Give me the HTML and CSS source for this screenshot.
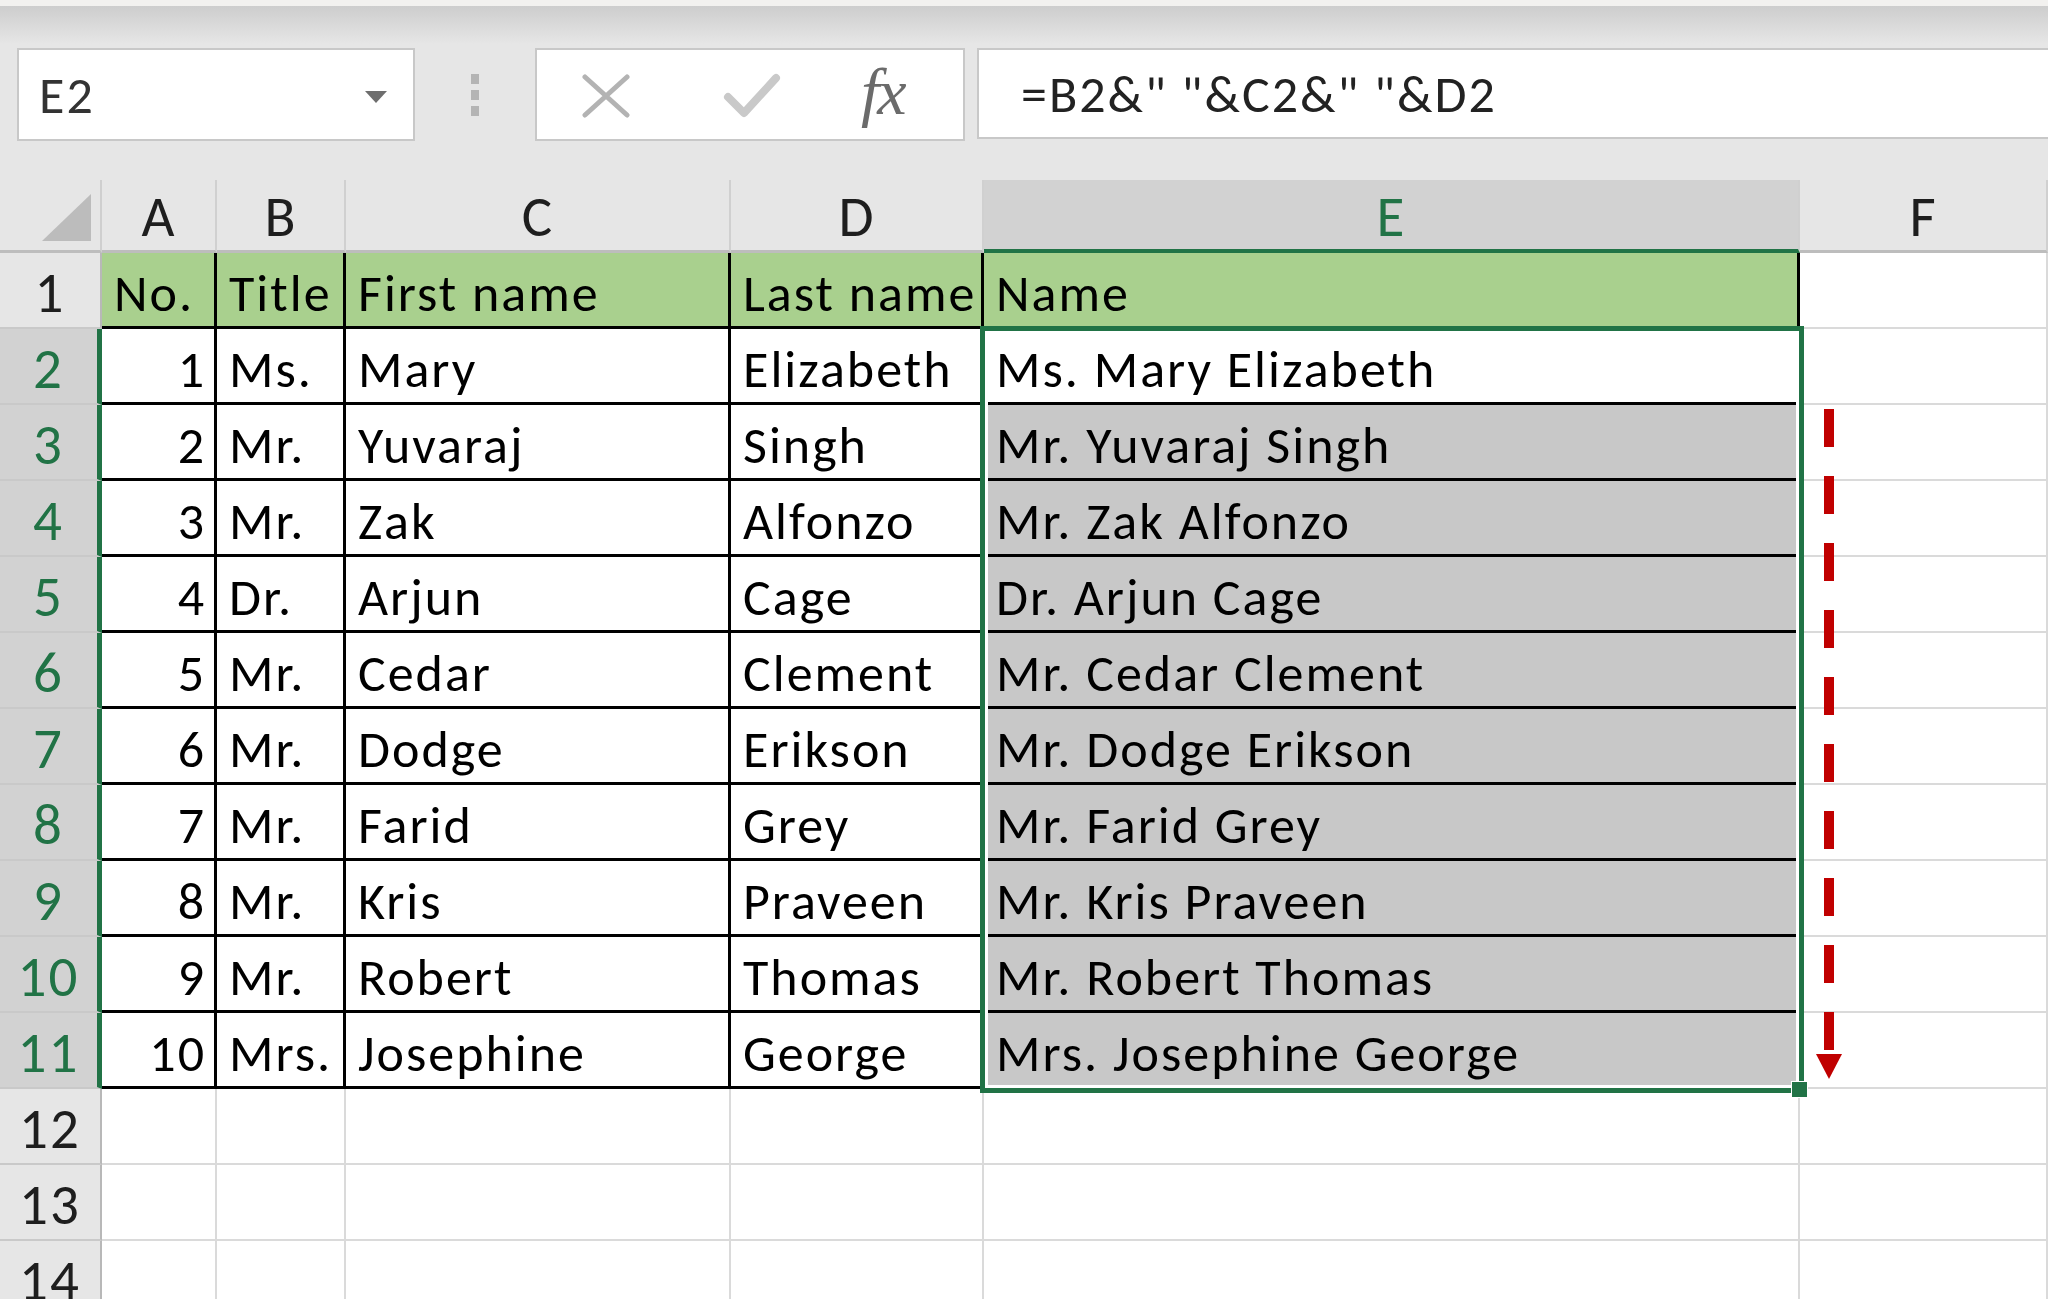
FILE: index.html
```html
<!DOCTYPE html>
<html>
<head>
<meta charset="utf-8">
<link rel="stylesheet" href="styles.css">
</head>
<body>
<div class="app">
  <div class="topband"></div>
  <div class="toolbar">
    <div class="namebox">
      <span class="nb-text">E2</span>
      <span class="nb-arrow"></span>
    </div>
    <div class="grip"><span></span><span></span><span></span></div>
    <div class="btnbox">
      <svg class="ic-x" width="50" height="44" viewBox="0 0 50 44"><path d="M4 3 L46 41 M46 3 L4 41" stroke="#b3b3b3" stroke-width="5" fill="none" stroke-linecap="round"/></svg>
      <svg class="ic-ok" width="58" height="46" viewBox="0 0 58 46"><path d="M5 24 L21 40 L53 5" stroke="#c9c9c9" stroke-width="8" fill="none" stroke-linecap="round" stroke-linejoin="round"/></svg>
      <span class="ic-fx">fx</span>
    </div>
    <div class="formula">=B2&amp;" "&amp;C2&amp;" "&amp;D2</div>
  </div>
  <div class="sheet">
    <div class="grid">
      <div class="corner"><span class="tri"></span></div>
      <div class="ch">A</div><div class="ch">B</div><div class="ch">C</div><div class="ch">D</div><div class="ch sel">E</div><div class="ch">F</div>

      <div class="rh">1</div>
      <div class="c d hd">No.</div><div class="c d hd">Title</div><div class="c d hd">First name</div><div class="c d hd">Last name</div><div class="c d hd">Name</div><div class="c"></div>

      <div class="rh sel">2</div>
      <div class="c d num">1</div><div class="c d">Ms.</div><div class="c d">Mary</div><div class="c d">Elizabeth</div><div class="c d">Ms. Mary Elizabeth</div><div class="c"></div>

      <div class="rh sel">3</div>
      <div class="c d num">2</div><div class="c d">Mr.</div><div class="c d">Yuvaraj</div><div class="c d">Singh</div><div class="c d gs">Mr. Yuvaraj Singh</div><div class="c"></div>

      <div class="rh sel">4</div>
      <div class="c d num">3</div><div class="c d">Mr.</div><div class="c d">Zak</div><div class="c d">Alfonzo</div><div class="c d gs">Mr. Zak Alfonzo</div><div class="c"></div>

      <div class="rh sel">5</div>
      <div class="c d num">4</div><div class="c d">Dr.</div><div class="c d">Arjun</div><div class="c d">Cage</div><div class="c d gs">Dr. Arjun Cage</div><div class="c"></div>

      <div class="rh sel">6</div>
      <div class="c d num">5</div><div class="c d">Mr.</div><div class="c d">Cedar</div><div class="c d">Clement</div><div class="c d gs">Mr. Cedar Clement</div><div class="c"></div>

      <div class="rh sel">7</div>
      <div class="c d num">6</div><div class="c d">Mr.</div><div class="c d">Dodge</div><div class="c d">Erikson</div><div class="c d gs">Mr. Dodge Erikson</div><div class="c"></div>

      <div class="rh sel">8</div>
      <div class="c d num">7</div><div class="c d">Mr.</div><div class="c d">Farid</div><div class="c d">Grey</div><div class="c d gs">Mr. Farid Grey</div><div class="c"></div>

      <div class="rh sel">9</div>
      <div class="c d num">8</div><div class="c d">Mr.</div><div class="c d">Kris</div><div class="c d">Praveen</div><div class="c d gs">Mr. Kris Praveen</div><div class="c"></div>

      <div class="rh sel">10</div>
      <div class="c d num">9</div><div class="c d">Mr.</div><div class="c d">Robert</div><div class="c d">Thomas</div><div class="c d gs">Mr. Robert Thomas</div><div class="c"></div>

      <div class="rh sel">11</div>
      <div class="c d num">10</div><div class="c d">Mrs.</div><div class="c d">Josephine</div><div class="c d">George</div><div class="c d gs">Mrs. Josephine George</div><div class="c"></div>

      <div class="rh">12</div>
      <div class="c"></div><div class="c"></div><div class="c"></div><div class="c"></div><div class="c"></div><div class="c"></div>

      <div class="rh">13</div>
      <div class="c"></div><div class="c"></div><div class="c"></div><div class="c"></div><div class="c"></div><div class="c"></div>

      <div class="rh">14</div>
      <div class="c"></div><div class="c"></div><div class="c"></div><div class="c"></div><div class="c"></div><div class="c"></div>
    </div>
    <div class="selection"></div>
    <div class="fillhandle"></div>
    <svg class="arrow" width="40" height="700" viewBox="0 0 40 700">
      <line x1="20" y1="0" x2="20" y2="642" stroke="#c00000" stroke-width="10" stroke-dasharray="38 29"/>
      <polygon points="7,645 33,645 20,670" fill="#c00000"/>
    </svg>
  </div>
</div>
</body>
</html>
```

FILE: styles.css
```css
html, body {
  margin: 0;
  padding: 0;
  width: 2048px;
  height: 1299px;
  overflow: hidden;
  background: #ffffff;
}

.app {
  font-family: "Carlito", "Calibri", "Lato", "Liberation Sans", sans-serif;
  font-weight: 500;
  color: #000;
}

.topband {
  height: 6px;
  background: #f2f1ef;
}

.toolbar {
  height: 174px;
  box-sizing: border-box;
  background: linear-gradient(#cdcdcd 0px, #e6e6e6 38px, #e6e6e6 100%);
  display: flex;
  align-items: flex-start;
  padding: 42px 0 0 17px;
}

.namebox {
  width: 398px;
  height: 93px;
  box-sizing: border-box;
  background: #fff;
  border: 2px solid #c8c8c8;
  display: flex;
  align-items: center;
  justify-content: space-between;
  padding: 0 26px 0 20px;
}

.nb-text {
  font-size: 52px;
  color: #333;
  line-height: 1;
  letter-spacing: 2px;
}

.nb-arrow {
  width: 0;
  height: 0;
  border-left: 11px solid transparent;
  border-right: 11px solid transparent;
  border-top: 12px solid #6e6e6e;
  margin-top: 4px;
}

.grip {
  width: 120px;
  height: 93px;
  display: flex;
  flex-direction: column;
  align-items: center;
  justify-content: center;
  gap: 6px;
}

.grip span {
  width: 8px;
  height: 10px;
  background: #b4b4b4;
}

.btnbox {
  width: 430px;
  height: 93px;
  box-sizing: border-box;
  background: #fff;
  border: 2px solid #c8c8c8;
  display: flex;
  align-items: center;
  padding: 0 0 0 44px;
}

.ic-x {
  margin-top: 2px;
}

.ic-ok {
  margin-left: 92px;
  margin-top: 2px;
}

.ic-fx {
  margin-left: 80px;
  font-family: "Liberation Serif", "DejaVu Serif", serif;
  font-style: italic;
  font-weight: 400;
  font-size: 66px;
  color: #6b6b6b;
  letter-spacing: -2px;
  line-height: 1;
  margin-top: -6px;
}

.formula {
  flex: 1;
  margin-left: 12px;
  height: 91px;
  box-sizing: border-box;
  background: #fff;
  border: 2px solid #c8c8c8;
  border-right: none;
  display: flex;
  align-items: center;
  padding-left: 42px;
  font-size: 52px;
  color: #222;
  line-height: 1;
  letter-spacing: 2px;
  white-space: pre;
}

.sheet {
  position: relative;
}

.grid {
  display: grid;
  grid-template-columns: 102px 115px 129px 385px 253px 816px 248px;
  grid-template-rows: 73px repeat(14, 76px);
}

.corner {
  background: #e6e6e6;
  border-right: 2px solid #cfcfcf;
  border-bottom: 3px solid #bdbdbd;
  box-sizing: border-box;
  display: flex;
  justify-content: flex-end;
  align-items: flex-end;
  padding: 0 9px 9px 0;
}

.tri {
  width: 49px;
  height: 47px;
  background: #bcbcbc;
  clip-path: polygon(100% 0, 100% 100%, 0 100%);
}

.ch {
  background: #e6e6e6;
  border-right: 2px solid #d0d0d0;
  border-bottom: 3px solid #bdbdbd;
  box-sizing: border-box;
  display: flex;
  justify-content: center;
  align-items: flex-end;
  font-size: 57px;
  line-height: 1;
  padding-bottom: 5px;
  color: #1e1e1e;
  letter-spacing: 1px;
}

.ch.sel {
  background: #d2d2d2;
  color: #217346;
  border-bottom: 4px solid #217346;
  padding-bottom: 4px;
}

.rh {
  background: #e6e6e6;
  border-right: 2px solid #b8b8b8;
  border-bottom: 2px solid #c9c9c9;
  box-sizing: border-box;
  display: flex;
  justify-content: center;
  align-items: flex-end;
  font-size: 57px;
  line-height: 1;
  padding-bottom: 6px;
  color: #1e1e1e;
  letter-spacing: 2px;
}

.rh.sel {
  background: #d2d2d2;
  color: #217346;
  border-right: 5px solid #217346;
}

.c {
  background: #fff;
  border-right: 2px solid #dadada;
  border-bottom: 2px solid #dadada;
  box-sizing: border-box;
  display: flex;
  align-items: flex-end;
  font-size: 52px;
  line-height: 1;
  padding: 0 10px 7px 12px;
  white-space: nowrap;
  overflow: hidden;
  letter-spacing: 2px;
}

.c.d {
  border-right: 3px solid #000;
  border-bottom: 3px solid #000;
}

.c.hd {
  background: #a9d08e;
}

.c.num {
  justify-content: flex-end;
  padding-right: 8px;
}

.c.gs {
  background: #c8c8c8;
}

.selection {
  position: absolute;
  left: 980px;
  top: 146px;
  width: 824px;
  height: 767px;
  box-sizing: border-box;
  border: 5px solid #217346;
  box-shadow: inset 0 0 0 3px #ffffff;
  pointer-events: none;
}

.fillhandle {
  position: absolute;
  left: 1792px;
  top: 902px;
  width: 15px;
  height: 15px;
  background: #217346;
  outline: 1px solid #ffffff;
}

.arrow {
  position: absolute;
  left: 1809px;
  top: 229px;
}
```
